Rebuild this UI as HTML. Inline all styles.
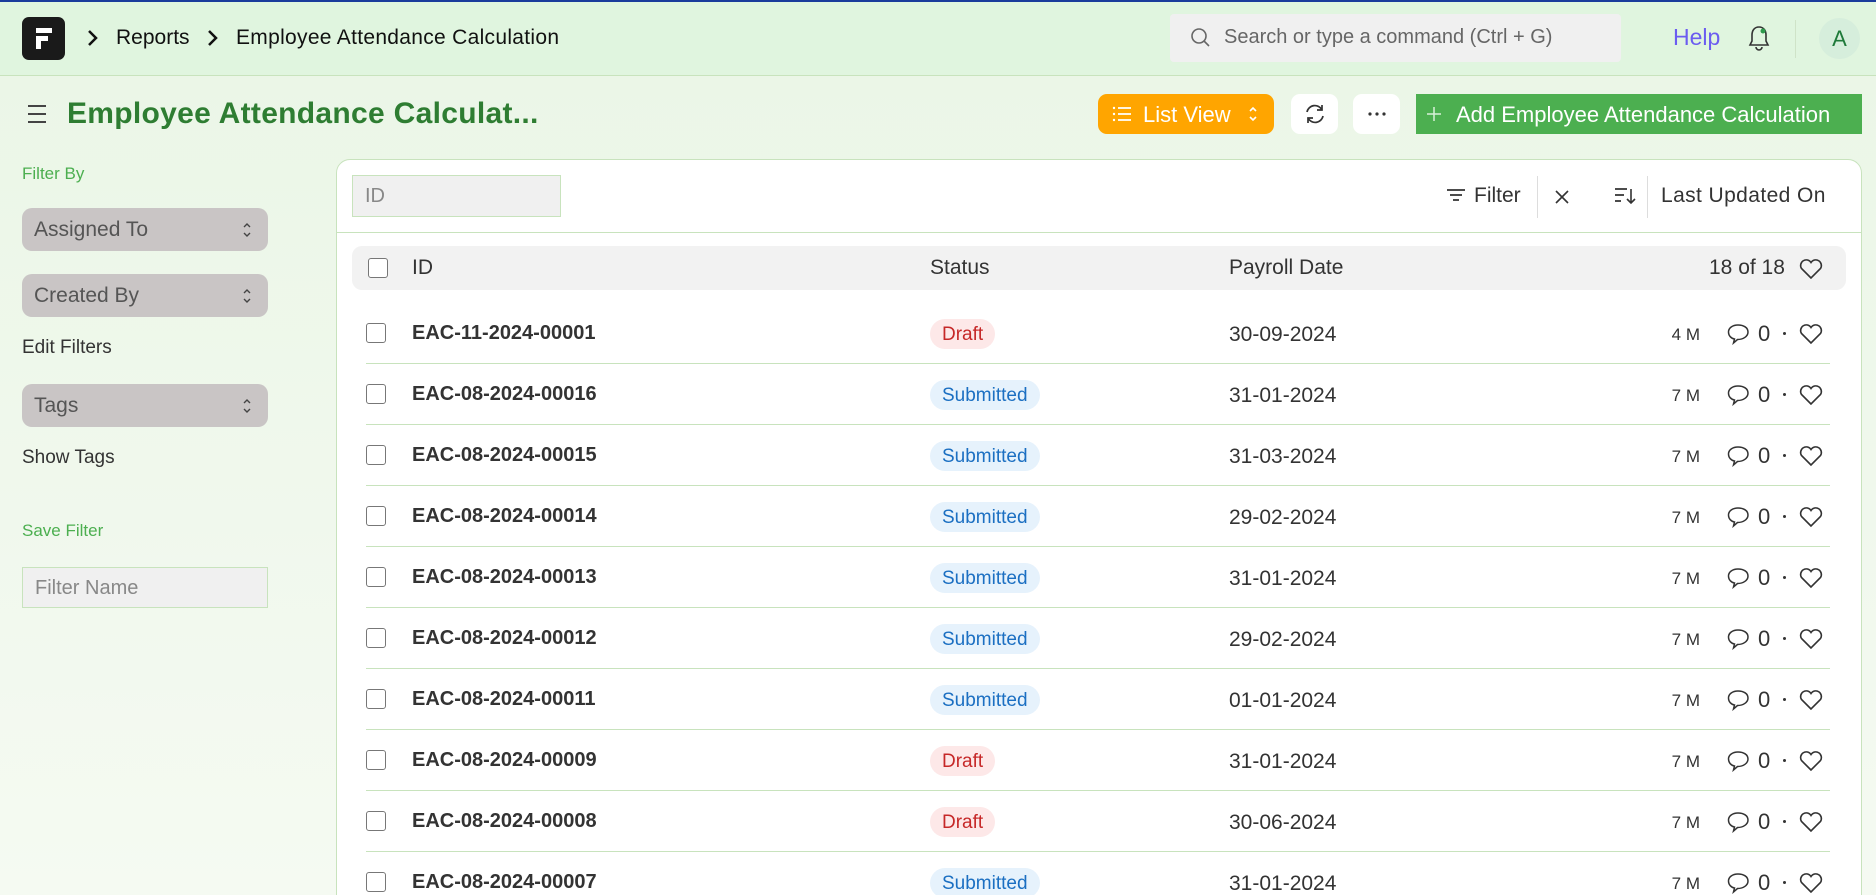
<!DOCTYPE html>
<html><head><meta charset="utf-8"><style>
*{box-sizing:border-box;margin:0;padding:0}
html,body{width:1876px;height:895px;overflow:hidden}
body{font-family:"Liberation Sans",sans-serif;background:#f3f9f0;color:#333}
#w{position:relative;width:1876px;height:895px;overflow:hidden;background:linear-gradient(180deg,#eaf6e6,#f5faf2)}
.a{position:absolute}
.nav{left:0;top:0;width:1876px;height:76px;background:#e0f5df;border-top:2px solid #1a3c9c;border-bottom:1px solid #c8e3bd}
.sel{left:22px;width:246px;height:43px;background:#c9c5c5;border-radius:10px;font-size:21px;color:#555;padding:10px 12px}
.side{left:22px;font-size:19px;color:#333}
.card{left:336px;top:159px;width:1526px;height:760px;background:#fff;border:1px solid #c8e3bd;border-radius:14px}
.row{left:366px;width:1464px;height:61px;border-bottom:1px solid #c8e3bd}
.cb{position:absolute;left:0;width:20px;height:20px;border:1.5px solid #777;border-radius:3px;background:#fff}
.id{position:absolute;left:46px;font-size:20px;font-weight:bold;color:#333}
.badge{position:absolute;left:564px;height:30px;border-radius:15px;font-size:19px;padding:5px 12px}
.dr{background:#fde8e8;color:#c62828}
.sb{background:#e6f2fc;color:#1b6fc2}
.dt{position:absolute;left:863px;font-size:21px;color:#333}
.tm{position:absolute;right:130px;font-size:17px;color:#333}
.ic{position:absolute}
</style></head><body><div id="w">
<div class="a nav"></div>
<div class="a" style="left:22px;top:17px;width:43px;height:43px;background:#1a1a1a;border-radius:7px"></div>
<div class="a" style="left:36px;top:28px;width:16px;height:5px;background:#fff"></div>
<div class="a" style="left:36px;top:36px;width:12px;height:5px;background:#fff"></div>
<div class="a" style="left:36px;top:36px;width:5px;height:13px;background:#fff"></div>
<svg class="a" style="left:86px;top:29px" width="14" height="18"><path d="M3 2l7 7-7 7" stroke="#111" stroke-width="2.5" fill="none"/></svg>
<div class="a" style="left:116px;top:26px;font-size:21px;color:#111">Reports</div>
<svg class="a" style="left:206px;top:29px" width="14" height="18"><path d="M3 2l7 7-7 7" stroke="#111" stroke-width="2.5" fill="none"/></svg>
<div class="a" style="left:236px;top:26px;font-size:21px;color:#111;letter-spacing:0.3px">Employee Attendance Calculation</div>
<div class="a" style="left:1170px;top:14px;width:451px;height:48px;background:#f0f0f0;border-radius:4px"></div>
<svg class="a" style="left:1190px;top:27px" width="22" height="22"><circle cx="9" cy="9" r="7" stroke="#666" stroke-width="1.6" fill="none"/><path d="M14 14l5 5" stroke="#666" stroke-width="1.6"/></svg>
<div class="a" style="left:1224px;top:26px;font-size:20px;color:#666">Search or type a command (Ctrl + G)</div>
<div class="a" style="left:1673px;top:24px;font-size:23px;color:#6b5cf0">Help</div>
<svg class="a" style="left:1747px;top:24px" width="24" height="28"><path d="M12 3c-5 0-7 4-7 8v6l-2 4h18l-2-4v-6c0-4-2-8-7-8z M9 23a3 3 0 0 0 6 0" stroke="#333" stroke-width="1.6" fill="none"/><circle cx="16" cy="7" r="2.5" fill="#2e9a4c"/></svg>
<div class="a" style="left:1795px;top:20px;width:1px;height:38px;background:#cfe3c8"></div>
<div class="a" style="left:1819px;top:18px;width:41px;height:41px;border-radius:50%;background:#d6eedc;color:#1f7a3a;font-size:22px;text-align:center;line-height:41px">A</div>

<svg class="a" style="left:26px;top:103px" width="22" height="22"><path d="M2 3h18M2 11h18M2 19h18" stroke="#444" stroke-width="2"/></svg>
<div class="a" style="left:67px;top:97px;font-size:30px;font-weight:bold;color:#2e7d32;letter-spacing:0.3px">Employee Attendance Calculat...</div>
<div class="a" style="left:1098px;top:94px;width:176px;height:40px;background:#ffa500;border-radius:9px;color:#fff;font-size:22px;padding:8px 0 0 45px">List View</div>
<svg class="a" style="left:1112px;top:105px" width="20" height="18"><path d="M6 3h13M6 9h13M6 15h13" stroke="#fff" stroke-width="1.8"/><circle cx="2" cy="3" r="1.2" fill="#fff"/><circle cx="2" cy="9" r="1.2" fill="#fff"/><circle cx="2" cy="15" r="1.2" fill="#fff"/></svg>
<svg class="a" style="left:1248px;top:105px" width="10" height="18"><path d="M2 6l3-3 3 3M2 12l3 3 3-3" stroke="#fff" stroke-width="1.6" fill="none"/></svg>
<div class="a" style="left:1291px;top:94px;width:47px;height:40px;background:#fff;border-radius:9px"></div>
<svg class="a" style="left:1303px;top:103px" width="24" height="22"><path d="M4 9a8 8 0 0 1 15-2M20 13a8 8 0 0 1-15 2" stroke="#333" stroke-width="1.7" fill="none"/><path d="M19 2v5h-5M5 20v-5h5" stroke="#333" stroke-width="1.7" fill="none"/></svg>
<div class="a" style="left:1353px;top:94px;width:47px;height:40px;background:#fff;border-radius:9px"></div>
<svg class="a" style="left:1366px;top:111px" width="22" height="6"><circle cx="4" cy="3" r="1.6" fill="#333"/><circle cx="11" cy="3" r="1.6" fill="#333"/><circle cx="18" cy="3" r="1.6" fill="#333"/></svg>
<div class="a" style="left:1416px;top:94px;width:446px;height:40px;background:#4caf50;color:#fff;font-size:22px;padding:8px 0 0 40px">Add Employee Attendance Calculation</div>
<svg class="a" style="left:1426px;top:106px" width="16" height="16"><path d="M8 1v14M1 8h14" stroke="#d8f0d8" stroke-width="1.5"/></svg>

<div class="a" style="left:22px;top:164px;font-size:17px;color:#4caf50">Filter By</div>
<div class="a sel" style="top:208px">Assigned To</div>
<div class="a sel" style="top:274px">Created By</div>
<div class="a sel" style="top:384px">Tags</div>
<svg class="a" style="left:242px;top:221px" width="10" height="18"><path d="M2 6l3-3 3 3M2 12l3 3 3-3" stroke="#444" stroke-width="1.4" fill="none"/></svg>
<svg class="a" style="left:242px;top:287px" width="10" height="18"><path d="M2 6l3-3 3 3M2 12l3 3 3-3" stroke="#444" stroke-width="1.4" fill="none"/></svg>
<svg class="a" style="left:242px;top:397px" width="10" height="18"><path d="M2 6l3-3 3 3M2 12l3 3 3-3" stroke="#444" stroke-width="1.4" fill="none"/></svg>
<div class="a side" style="top:337px">Edit Filters</div>
<div class="a side" style="top:447px">Show Tags</div>
<div class="a" style="left:22px;top:521px;font-size:17px;color:#4caf50">Save Filter</div>
<div class="a" style="left:22px;top:567px;width:246px;height:41px;background:#f0f0f0;border:1px solid #c8e3bd;font-size:20px;color:#888;padding:9px 12px">Filter Name</div>

<div class="a card"></div>
<div class="a" style="left:352px;top:175px;width:209px;height:42px;background:#f0f0f0;border:1px solid #c8e3bd;font-size:20px;color:#888;padding:9px 12px">ID</div>
<svg class="a" style="left:1446px;top:187px" width="20" height="16"><path d="M1 3h18M4 8h12M7 13h6" stroke="#333" stroke-width="1.7"/></svg>
<div class="a" style="left:1474px;top:184px;font-size:21px;color:#333">Filter</div>
<div class="a" style="left:1537px;top:176px;width:1px;height:42px;background:#ddd"></div>
<svg class="a" style="left:1554px;top:189px" width="16" height="16"><path d="M2 2l12 12M14 2L2 14" stroke="#333" stroke-width="1.6"/></svg>
<svg class="a" style="left:1614px;top:186px" width="22" height="20"><path d="M1 3h12M1 9h9M1 15h6" stroke="#333" stroke-width="1.7"/><path d="M17 3v14M13 13l4 4 4-4" stroke="#333" stroke-width="1.6" fill="none"/></svg>
<div class="a" style="left:1647px;top:176px;width:1px;height:42px;background:#ddd"></div>
<div class="a" style="left:1661px;top:184px;font-size:21px;color:#333;letter-spacing:0.4px">Last Updated On</div>
<div class="a" style="left:336px;top:232px;width:1526px;height:1px;background:#c8e3bd"></div>

<div class="a" style="left:352px;top:246px;width:1494px;height:44px;background:#f2f2f2;border-radius:10px"></div>
<div class="a" style="left:368px;top:258px;width:20px;height:20px;border:1.5px solid #777;border-radius:3px;background:#fff"></div>
<div class="a" style="left:412px;top:256px;font-size:21px;color:#333">ID</div>
<div class="a" style="left:930px;top:256px;font-size:21px;color:#333">Status</div>
<div class="a" style="left:1229px;top:256px;font-size:21px;color:#333">Payroll Date</div>
<div class="a" style="left:1709px;top:256px;font-size:21px;color:#333">18 of 18</div>
<svg class="a" style="left:1798px;top:257px" width="26" height="24"><path d="M13 21L3.5 11.5a5.5 5.5 0 0 1 9.5-6 5.5 5.5 0 0 1 9.5 6z" stroke="#333" stroke-width="1.6" fill="none"/></svg>

<div id="rows"></div>
</div>
<script>
var d=[["EAC-11-2024-00001","Draft","30-09-2024","4 M"],["EAC-08-2024-00016","Submitted","31-01-2024","7 M"],["EAC-08-2024-00015","Submitted","31-03-2024","7 M"],["EAC-08-2024-00014","Submitted","29-02-2024","7 M"],["EAC-08-2024-00013","Submitted","31-01-2024","7 M"],["EAC-08-2024-00012","Submitted","29-02-2024","7 M"],["EAC-08-2024-00011","Submitted","01-01-2024","7 M"],["EAC-08-2024-00009","Draft","31-01-2024","7 M"],["EAC-08-2024-00008","Draft","30-06-2024","7 M"],["EAC-08-2024-00007","Submitted","31-01-2024","7 M"]];
var h="";
d.forEach(function(r,i){var t=303+i*61;
h+='<div class="a row" style="top:'+t+'px"><div class="cb" style="top:20px"></div><div class="id" style="top:19px">'+r[0]+'</div><div class="badge '+(r[1]=="Draft"?"dr":"sb")+'" style="top:16px">'+r[1]+'</div><div class="dt" style="top:20px">'+r[2]+'</div><div class="tm" style="top:22px">'+r[3]+'</div>'+
'<svg class="ic" style="left:1360px;top:18px" width="26" height="26"><path d="M12 4c-5.5 0-9.5 3-9.5 7s3 6.5 6 7l-1 4 4-3.5c5.5 0 10.5-3 10.5-7.5s-4.5-7-10-7z" stroke="#333" stroke-width="1.5" fill="none"/></svg>'+
'<div class="ic" style="left:1392px;top:18px;font-size:22px;color:#333">0</div><div class="ic" style="left:1417px;top:29px;width:3px;height:3px;border-radius:50%;background:#333"></div>'+
'<svg class="ic" style="left:1432px;top:19px" width="26" height="24"><path d="M13 21L3.5 11.5a5.5 5.5 0 0 1 9.5-6 5.5 5.5 0 0 1 9.5 6z" stroke="#333" stroke-width="1.6" fill="none"/></svg></div>';});
document.getElementById("rows").innerHTML=h;
</script>
</body></html>
